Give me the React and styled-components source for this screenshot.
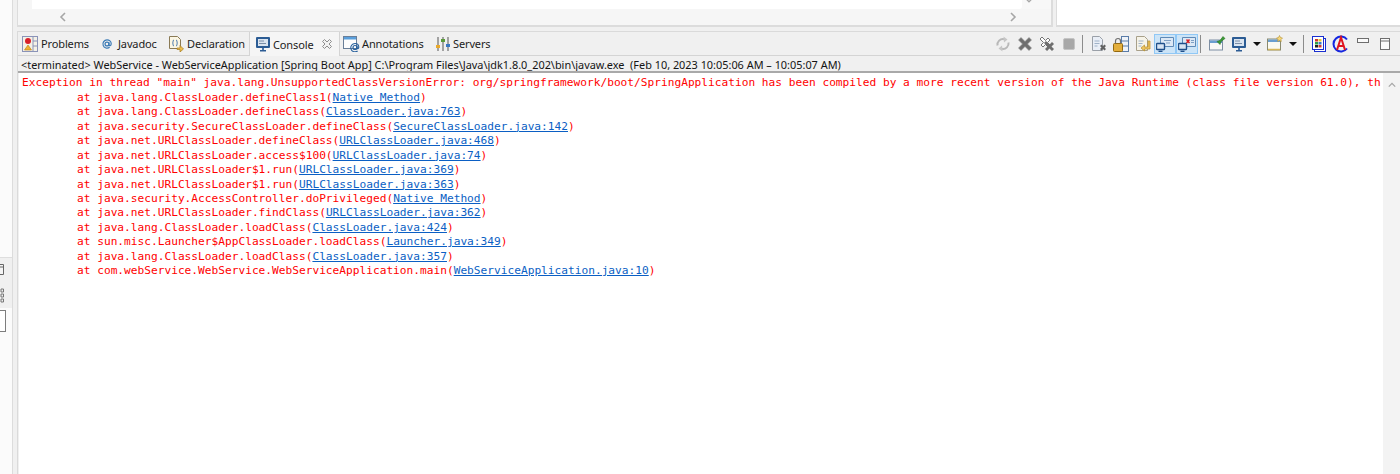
import styled, { createGlobalStyle } from 'styled-components';

const GlobalStyle = createGlobalStyle`
	html, body {
		margin: 0;
		padding: 0;
		height: 100%;
		background: #f0f0f0;
		overflow: hidden;
	}
	#root {
		height: 100%;
	}
`;

const Workbench = styled.div`
	display: flex;
	width: 1400px;
	height: 474px;
	overflow: hidden;
	background: #f0f0f0;
	font-family: 'Noto Sans', 'Open Sans', sans-serif;
`;

const Trim = styled.aside`
	display: flex;
	flex-direction: column;
	flex: none;
	width: 12px;
	background: #fbfbfb;
	border-right: 1px solid #dcdcdc;
	overflow: hidden;
`;

const TrimSpacer = styled.div`
	flex: none;
	height: 257px;
	border-bottom: 1px solid #dedede;
`;

const TrimTools = styled.div`
	display: flex;
	flex-direction: column;
	align-items: flex-end;
	flex: none;
	height: 50px;
	padding-top: 5px;
	gap: 8px;
	background: #f0f0f0;
	box-sizing: border-box;
`;

const TrimGlyph = styled.svg`
	flex: none;
	width: 16px;
	height: 16px;
	margin-right: 4px;
`;

const TrimBox = styled.div`
	flex: none;
	align-self: flex-end;
	width: 10px;
	height: 20px;
	margin: 2px 6px 0 0;
	background: #fff;
	border: 1px solid #7d7d7d;
`;

const Main = styled.main`
	display: flex;
	flex-direction: column;
	flex: 1;
	min-width: 0;
	margin-left: 4px;
`;

const TopRow = styled.div`
	display: flex;
	flex: none;
	height: 27px;
	gap: 3px;
`;

const EditorPane = styled.div`
	display: flex;
	flex-direction: column;
	flex: none;
	width: 1036px;
	background: #fff;
	border-left: 1px solid #dcdcdc;
	border-right: 2px solid #dcdcdc;
	border-bottom: 2px solid #dcdcdc;
	box-sizing: border-box;
`;

const EditorBody = styled.div`
	display: flex;
	flex: none;
	height: 9px;
	overflow: hidden;
	background: #f8f8f8;
`;

const Ruler = styled.div`
	flex: none;
	width: 14px;
	background: #f6f6f6;
`;

const EditorText = styled.div`
	flex: 1;
	background: #fff;
	border-bottom-right-radius: 3px;
`;

const VScrollStub = styled.div`
	flex: none;
	width: 29px;
	padding-left: 3px;
	box-sizing: border-box;
	background: #f8f8f8;
`;

const HScroll = styled.div`
	display: flex;
	align-items: center;
	justify-content: space-between;
	flex: 1;
	padding: 0 34px 0 41px;
	background: #f6f6f6;
`;

const Chevron = styled.svg`
	display: block;
	width: 8px;
	height: 10px;
	fill: none;
	stroke: #a6a6a6;
	stroke-width: 1.6;
`;

const StubChevron = styled(Chevron)`
	margin-top: -4px;
`;

const SidePane = styled.div`
	flex: 1;
	background: #fff;
	border-left: 1px solid #dcdcdc;
	border-bottom: 2px solid #dcdcdc;
`;

const ConsoleView = styled.section`
	display: flex;
	flex-direction: column;
	flex: 1;
	min-height: 0;
	margin-top: 4px;
	border-top: 1px solid #dadada;
	border-left: 1px solid #dadada;
`;

const TabBar = styled.div`
	display: flex;
	align-items: stretch;
	flex: none;
	height: 23px;
	border-bottom: 1px solid #d4d4d4;
`;

const Tab = styled.div`
	display: flex;
	align-items: center;
	flex: none;
	gap: ${(p) => p.$gap || 3}px;
	width: ${(p) => p.$width}px;
	padding-left: ${(p) => p.$pad || 0}px;
	box-sizing: border-box;
	font-size: 11px;
	letter-spacing: -0.13px;
	color: #1c1c1c;
	white-space: nowrap;
`;

const ActiveTab = styled(Tab)`
	height: 24px;
	background: #f5f5f5;
	border-left: 1px solid #d4d4d4;
	border-right: 1px solid #d4d4d4;
`;

const TabClose = styled.span`
	display: flex;
	flex: none;
	margin-left: 6px;
`;

const Spacer = styled.div`
	flex: 1;
`;

const Toolbar = styled.div`
	display: flex;
	align-items: center;
	flex: none;
	padding-right: 4px;
`;

const ToolButton = styled.div`
	display: flex;
	align-items: center;
	justify-content: center;
	flex: none;
	width: 22px;
	height: 20px;
	box-sizing: border-box;
	background: ${(p) => (p.$on ? '#cce4f7' : 'transparent')};
	border: 1px solid ${(p) => (p.$on ? '#90c8f6' : 'transparent')};
`;

const Caret = styled.div`
	flex: none;
	width: 0;
	height: 0;
	margin: 0 3px;
	border-left: 4px solid transparent;
	border-right: 4px solid transparent;
	border-top: 4px solid #111;
`;

const ToolSep = styled.div`
	flex: none;
	width: 1px;
	height: 18px;
	margin: 0 ${(p) => p.$right || 5}px 0 ${(p) => p.$left || 2}px;
	background: #8c8c8c;
`;

const Icon = styled.svg`
	flex: none;
	display: block;
	width: ${(p) => p.$size || 16}px;
	height: ${(p) => p.$size || 16}px;
`;

const ProcessLine = styled.div`
	flex: none;
	height: 14px;
	padding: 1px 0 0 3px;
	line-height: 15px;
	font-size: 10.9px;
	color: #141414;
	white-space: pre;
	overflow: hidden;
	border-bottom: 2px solid #a9a9a9;
`;

const ConsoleBody = styled.div`
	display: flex;
	flex: 1;
	min-height: 0;
	margin-left: 1px;
`;

const Output = styled.pre`
	flex: 1;
	min-width: 0;
	margin: 0;
	padding: 3.4px 0 0 3px;
	font-family: 'DejaVu Sans Mono', 'Liberation Mono', monospace;
	font-size: 11.185px;
	line-height: 14.46px;
	tab-size: 55px;
	color: #ff0000;
	background: #fff;
	overflow: hidden;
`;

const SourceLink = styled.span`
	color: #0b5fc4;
	text-decoration: underline;
`;

const VScroll = styled.div`
	display: flex;
	justify-content: center;
	flex: none;
	width: 17px;
	padding-top: 7px;
	box-sizing: border-box;
	background: #f3f3f3;
`;

const stack = [
	['java.lang.ClassLoader.defineClass1', 'Native Method'],
	['java.lang.ClassLoader.defineClass', 'ClassLoader.java:763'],
	['java.security.SecureClassLoader.defineClass', 'SecureClassLoader.java:142'],
	['java.net.URLClassLoader.defineClass', 'URLClassLoader.java:468'],
	['java.net.URLClassLoader.access$100', 'URLClassLoader.java:74'],
	['java.net.URLClassLoader$1.run', 'URLClassLoader.java:369'],
	['java.net.URLClassLoader$1.run', 'URLClassLoader.java:363'],
	['java.security.AccessController.doPrivileged', 'Native Method'],
	['java.net.URLClassLoader.findClass', 'URLClassLoader.java:362'],
	['java.lang.ClassLoader.loadClass', 'ClassLoader.java:424'],
	['sun.misc.Launcher$AppClassLoader.loadClass', 'Launcher.java:349'],
	['java.lang.ClassLoader.loadClass', 'ClassLoader.java:357'],
	['com.webService.WebService.WebServiceApplication.main', 'WebServiceApplication.java:10'],
];

const ProblemsIcon = () => (
	<Icon viewBox="0 0 16 16">
		<rect x="0.5" y="0.5" width="15" height="15" fill="#f4f1e6" stroke="#8a93b8" />
		<path d="M11 1v14M11 5h4M11 10h4" stroke="#8a93b8" fill="none" />
		<circle cx="6" cy="5" r="3" fill="#d9202a" />
		<path d="M2.5 14l3.5-5 3.5 5z" fill="#f1b233" stroke="#b67b14" strokeWidth="0.6" />
	</Icon>
);

const JavadocIcon = () => (
	<Icon viewBox="0 0 16 16" $size={12}>
		<circle cx="8" cy="8" r="2.6" fill="none" stroke="#3a7ab5" strokeWidth="1.6" />
		<path d="M10.6 5.5v3.6c0 1.8 3 1.6 3-1.4C13.6 4.400 11 2.500 8 2.500A5.500 5.500 0 1 0 11.500 12.300" fill="none" stroke="#3a7ab5" strokeWidth="1.6" />
	</Icon>
);

const DeclarationIcon = () => (
	<Icon viewBox="0 0 16 16">
		<path d="M1.500 0.500h8l3 3v9h-11z" fill="#fbf6e4" stroke="#8a7a55" />
		<path d="M6 4c-1.500 0-.5 2.500-1.500 3 1 .5 0 3 1.500 3M8 4c1.500 0 .5 2.500 1.500 3-1 .5 0 3-1.500 3" fill="none" stroke="#3a6ea8" />
		<path d="M9 12h3v-2.500l3.500 3.500-3.500 3v-2.500H9z" fill="#eebf4f" stroke="#a47a1c" strokeWidth="0.7" />
	</Icon>
);

const MonitorIcon = () => (
	<Icon viewBox="0 0 16 16">
		<rect x="1" y="1" width="14" height="11" rx="1" fill="#2c5c94" />
		<rect x="3" y="3" width="10" height="7" fill="#dbe5f0" />
		<path d="M4 5h5M4 7.500h7" stroke="#7a8ea8" />
		<path d="M5 14h6v1.500H5z" fill="#2c5c94" />
		<path d="M7 12h2v2H7z" fill="#4d78aa" />
	</Icon>
);

const CloseIcon = () => (
	<Icon viewBox="0 0 12 12" $size={12}>
		<path d="M1.500 3.500l2-2L6 4l2.500-2.500 2 2L8 6l2.500 2.500-2 2L6 8l-2.500 2.500-2-2L4 6z" fill="#f2f2f2" stroke="#8e8e8e" />
	</Icon>
);

const AnnotationsIcon = () => (
	<Icon viewBox="0 0 17 17" $size={17}>
		<rect x="0.500" y="1.500" width="13" height="12" fill="#fdfdfd" stroke="#6a7f98" />
		<rect x="1" y="2" width="12" height="2.500" fill="#5a9fdc" />
		<circle cx="12" cy="12.500" r="2" fill="none" stroke="#27609c" strokeWidth="1.200" />
		<path d="M14 10.500v2.500c0 1 1.800 1 1.800-.8 0-2.400-1.800-3.700-3.800-3.700a4.200 4.200 0 1 0 2.600 7.500" fill="none" stroke="#27609c" strokeWidth="1.100" />
	</Icon>
);

const ServersIcon = () => (
	<Icon viewBox="0 0 16 16">
		<path d="M3 1v14M8 1v14M13 1v14" stroke="#555" />
		<rect x="1" y="9" width="4" height="3" fill="#e9a92c" />
		<rect x="6" y="3" width="4" height="3" fill="#5b9a3a" />
		<rect x="11" y="8" width="4" height="3" fill="#3a78c2" />
	</Icon>
);

const SyncIcon = () => (
	<Icon viewBox="0 0 16 16">
		<path d="M2.500 9.500A5.500 5.500 0 0 1 9 3.200" fill="none" stroke="#b8b8b8" strokeWidth="2" />
		<path d="M8.500 0.500l4 3-3.500 3z" fill="#c6c6c6" />
		<path d="M13.500 6.500A5.500 5.500 0 0 1 7 12.800" fill="none" stroke="#b8b8b8" strokeWidth="2" />
		<path d="M7.500 15.500l-4-3 3.500-3z" fill="#c6c6c6" />
	</Icon>
);

const RemoveIcon = () => (
	<Icon viewBox="0 0 16 16">
		<path d="M1.500 4L4 1.500 8 5.500 12 1.500 14.500 4 10.500 8 14.500 12 12 14.500 8 10.500 4 14.500 1.500 12 5.500 8z" fill="#6f6f6f" stroke="#8c8c8c" strokeWidth="0.6" />
	</Icon>
);

const RemoveAllIcon = () => (
	<Icon viewBox="0 0 16 16">
		<path d="M1 3l2-2 3.500 3.500L9 2l2 2-2.500 2.500L11 9 9 11 6.500 8.500 4 11 2 9l2.500-2.500z" fill="#fff" stroke="#666" strokeWidth="0.9" />
		<path d="M5 7l2-2 3.500 3.500L13 6l2 2-2.500 2.500L15 13l-2 2-2.500-2.500L8 15l-2-2 2.500-2.500z" fill="#6f6f6f" />
	</Icon>
);

const StopIcon = () => (
	<Icon viewBox="0 0 16 16">
		<rect x="2.500" y="2.500" width="11" height="11" rx="1.500" fill="#a8a8a8" stroke="#c4c4c4" />
	</Icon>
);

const ClearIcon = () => (
	<Icon viewBox="0 0 16 16">
		<path d="M1.500 0.500h7l3 3v11h-10z" fill="#e9eef6" stroke="#9aa0a8" />
		<path d="M3.500 5h5M3.500 7.500h5M3.500 10h3" stroke="#9fb2c8" />
		<path d="M9 10l1.500-1.500 1.500 1.500 1.500-1.500L15 10l-1.500 1.500L15 13l-1.500 1.500L12 13l-1.500 1.500L9 13l1.500-1.500z" fill="#616161" />
	</Icon>
);

const ScrollLockIcon = () => (
	<Icon viewBox="0 0 16 16">
		<rect x="8.500" y="0.500" width="7" height="15" fill="#eef2f8" stroke="#5a7ca8" />
		<path d="M9 5h6M9 10h6" stroke="#5a7ca8" />
		<rect x="0.500" y="7.500" width="9" height="8" rx="1" fill="#e3ae3c" stroke="#94690f" />
		<path d="M2.500 7.500V5a2.500 2.500 0 0 1 5 0v2.500" fill="none" stroke="#6e6e6e" strokeWidth="1.200" />
	</Icon>
);

const WordWrapIcon = () => (
	<Icon viewBox="0 0 16 16">
		<path d="M1.500 0.500h8l3 3v11h-11z" fill="#f6f3e8" stroke="#a8a08a" />
		<path d="M3.500 5h5M3.500 7.500h4M3.500 10h3" stroke="#9fb2c8" />
		<path d="M13 5v6H9.500V9L6 12l3.500 3v-2h5.500V5z" fill="#efc564" stroke="#b98f2a" strokeWidth="0.7" />
	</Icon>
);

const ShowOutIcon = () => (
	<Icon viewBox="0 0 18 16" $size={18}>
		<path d="M4.500 1.500h13v9H8v-3H4.500z" fill="#dce8f5" stroke="#5e8ab8" />
		<path d="M8 4.500h7M10 7h4" stroke="#7fa0c4" />
		<rect x="0.500" y="7.500" width="8" height="6" rx="0.800" fill="#d8e4f2" stroke="#1f4f8a" strokeWidth="1.400" />
		<path d="M2.500 15.300h4" stroke="#1f4f8a" strokeWidth="1.400" />
	</Icon>
);

const ShowErrIcon = () => (
	<Icon viewBox="0 0 18 16" $size={18}>
		<path d="M4.500 1.500h13v9H8v-3H4.500z" fill="#dce8f5" stroke="#5e8ab8" />
		<path d="M8.500 3.500l3 3.500M11.500 3.500l-3 3.500" stroke="#d81f26" strokeWidth="1.500" />
		<path d="M13 4.500h3M13 6.500h3" stroke="#7fa0c4" />
		<rect x="0.500" y="7.500" width="8" height="6" rx="0.800" fill="#d8e4f2" stroke="#1f4f8a" strokeWidth="1.400" />
		<path d="M2.500 15.300h4" stroke="#1f4f8a" strokeWidth="1.400" />
	</Icon>
);

const PinIcon = () => (
	<Icon viewBox="0 0 17 16" $size={17}>
		<rect x="0.500" y="4.500" width="13" height="10" fill="#f8f8f6" stroke="#7d8ea3" />
		<rect x="1" y="5" width="12" height="2.500" fill="#6a9ed0" />
		<path d="M8 6l3-1 3-4 2 2-4 3-1 3z" fill="#3c9a36" stroke="#24701f" strokeWidth="0.6" />
	</Icon>
);

const NewConsoleIcon = () => (
	<Icon viewBox="0 0 17 16" $size={17}>
		<rect x="0.500" y="3.500" width="13" height="11" fill="#fbfaf2" stroke="#8a8a6e" />
		<rect x="1" y="4" width="12" height="2.500" fill="#6a9ed0" />
		<path d="M1 14h12" stroke="#d8b85a" strokeWidth="1.500" />
		<path d="M12.500 0l1 2 2 .5-1.500 1.500.3 2-1.800-1-1.800 1 .3-2L9.500 2.500l2-.5z" fill="#f6d77a" stroke="#b38f2e" strokeWidth="0.6" />
	</Icon>
);

const OutlineIcon = () => (
	<Icon viewBox="0 0 16 16">
		<rect x="3.500" y="2.500" width="11" height="13" fill="#fff" stroke="#1a2fd0" />
		<rect x="1.500" y="0.500" width="11" height="13" fill="#fff" stroke="#1a2fd0" />
		<rect x="4" y="3" width="3" height="2.500" fill="#cf3a2c" />
		<rect x="7.500" y="3" width="3" height="2.500" fill="#e9c832" />
		<rect x="4" y="6" width="3" height="2.500" fill="#2f9e44" />
		<rect x="7.500" y="6" width="3" height="2.500" fill="#3a78c2" />
		<rect x="4" y="9" width="3" height="2.500" fill="#222" />
		<rect x="7.500" y="9" width="3" height="2.500" fill="#cf3a2c" />
	</Icon>
);

const AntIcon = () => (
	<Icon viewBox="0 0 18 18" $size={18}>
		<path d="M15 4.500A7.500 7.500 0 1 0 15 13.500" fill="none" stroke="#1426e0" strokeWidth="2" />
		<path d="M5 15L9 2.500 13 15M6.500 11h5" fill="none" stroke="#e0141e" strokeWidth="2" />
	</Icon>
);

const MinimizeIcon = () => (
	<Icon viewBox="0 0 16 16">
		<rect x="2.500" y="2.500" width="11" height="4" fill="#fafafa" stroke="#6e6e6e" />
	</Icon>
);

const MaximizeIcon = () => (
	<Icon viewBox="0 0 16 16">
		<rect x="3.500" y="2.500" width="9" height="11" fill="#fafafa" stroke="#6e6e6e" />
		<path d="M3.500 5h9" stroke="#6e6e6e" />
	</Icon>
);

export default function App() {
	return (
		<>
			<GlobalStyle />
			<Workbench>
				<Trim>
					<TrimSpacer />
					<TrimTools>
						<TrimGlyph viewBox="0 0 16 16">
							<path d="M4 1.500h7.500v10H4zM4 4h7.500" fill="#f4f4f4" stroke="#666" />
						</TrimGlyph>
						<TrimGlyph viewBox="0 0 16 16">
							<path d="M9 2h2.500v3H9zM9 7h2.500v3H9zM9 12h2.500v3H9z" fill="none" stroke="#777" />
						</TrimGlyph>
					</TrimTools>
					<TrimBox />
				</Trim>
				<Main>
					<TopRow>
						<EditorPane>
							<EditorBody>
								<Ruler />
								<EditorText />
								<VScrollStub>
									<StubChevron viewBox="0 0 10 8">
										<path d="M1 1l4 4 4-4" />
									</StubChevron>
								</VScrollStub>
							</EditorBody>
							<HScroll>
								<Chevron viewBox="0 0 8 10">
									<path d="M6 1L2 5l4 4" />
								</Chevron>
								<Chevron viewBox="0 0 8 10">
									<path d="M2 1l4 4-4 4" />
								</Chevron>
							</HScroll>
						</EditorPane>
						<SidePane />
					</TopRow>
					<ConsoleView>
						<TabBar>
							<Tab $width={72} $pad={4}><ProblemsIcon />Problems</Tab>
							<Tab $width={78} $pad={11} $gap={5}><JavadocIcon />Javadoc</Tab>
							<Tab $width={81} $pad={0}><DeclarationIcon />Declaration</Tab>
							<ActiveTab $width={91} $pad={5} $gap={2}>
								<MonitorIcon />
								Console
								<TabClose><CloseIcon /></TabClose>
							</ActiveTab>
							<Tab $width={93} $pad={3} $gap={2}><AnnotationsIcon />Annotations</Tab>
							<Tab $width={70} $pad={2} $gap={2}><ServersIcon />Servers</Tab>
							<Spacer />
							<Toolbar>
								<ToolButton><SyncIcon /></ToolButton>
								<ToolButton><RemoveIcon /></ToolButton>
								<ToolButton><RemoveAllIcon /></ToolButton>
								<ToolButton><StopIcon /></ToolButton>
								<ToolSep />
								<ToolButton><ClearIcon /></ToolButton>
								<ToolButton><ScrollLockIcon /></ToolButton>
								<ToolButton><WordWrapIcon /></ToolButton>
								<ToolButton $on><ShowOutIcon /></ToolButton>
								<ToolButton $on><ShowErrIcon /></ToolButton>
								<ToolSep />
								<ToolButton><PinIcon /></ToolButton>
								<ToolButton><MonitorIcon /></ToolButton>
								<Caret />
								<ToolButton><NewConsoleIcon /></ToolButton>
								<Caret />
								<ToolSep $left={3} $right={4} />
								<ToolButton><OutlineIcon /></ToolButton>
								<ToolButton><AntIcon /></ToolButton>
								<ToolButton><MinimizeIcon /></ToolButton>
								<ToolButton><MaximizeIcon /></ToolButton>
							</Toolbar>
						</TabBar>
						<ProcessLine>
							{'<terminated> WebService - WebServiceApplication [Spring Boot App] C:\\Program Files\\Java\\jdk1.8.0_202\\bin\\javaw.exe  (Feb 10, 2023 10:05:06 AM – 10:05:07 AM)'}
						</ProcessLine>
						<ConsoleBody>
							<Output>
								{'Exception in thread "main" java.lang.UnsupportedClassVersionError: org/springframework/boot/SpringApplication has been compiled by a more recent version of the Java Runtime (class file version 61.0), th\n'}
								{stack.map(([frame, source]) => (
									<span key={frame + source}>
										{`\tat ${frame}(`}
										<SourceLink>{source}</SourceLink>
										{')\n'}
									</span>
								))}
							</Output>
							<VScroll>
								<Chevron viewBox="0 0 10 8">
									<path d="M1 6l4-4 4 4" />
								</Chevron>
							</VScroll>
						</ConsoleBody>
					</ConsoleView>
				</Main>
			</Workbench>
		</>
	);
}
